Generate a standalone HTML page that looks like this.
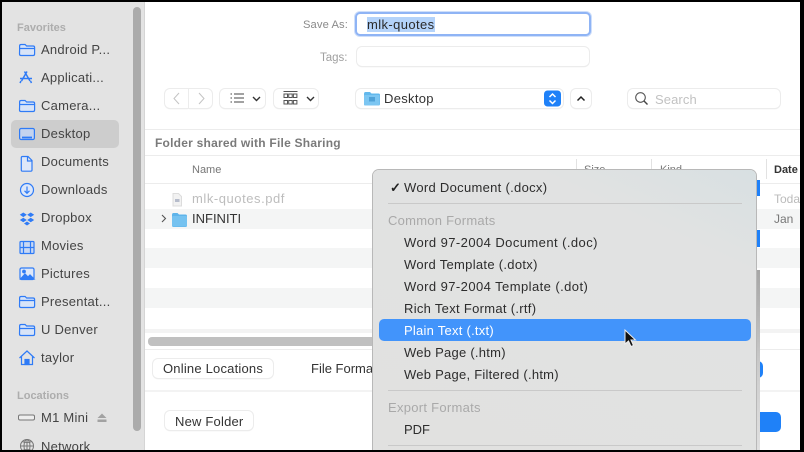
<!DOCTYPE html>
<html><head><meta charset="utf-8">
<style>
html,body{margin:0;padding:0;background:#000}
#p{position:relative;width:804px;height:452px;overflow:hidden;background:#000;font-family:"Liberation Sans",sans-serif;font-size:13px;color:#3a3a3a}
#c{position:absolute;left:0;top:0;width:804px;height:452px;filter:blur(.3px)}
#w{position:absolute;left:2px;top:2px;width:798px;height:448px;background:#fff;overflow:hidden}
.a{position:absolute;white-space:nowrap}
.b{position:absolute;background:#fff;border-radius:5px;box-shadow:0 0 0 1px #ececec,0 1px 1px #ddd}
.s{position:absolute;left:41px;font-size:13px;color:#444;white-space:nowrap;line-height:16px;letter-spacing:.25px}
.r{position:absolute;left:145px;width:655px;background:#f4f5f5}
.m{position:absolute;left:404px;font-size:13px;color:#2d2d2d;white-space:nowrap;line-height:16px;letter-spacing:.3px}
svg{position:absolute;overflow:visible}
.ln{fill:none;stroke:#2f7bf6;stroke-width:1.2}
</style></head><body>
<div id="p"><div id="c">
<div id="w"></div>

<!-- sidebar -->
<div class="a" style="left:2px;top:2px;width:142px;height:448px;background:#e3e3e3;border-right:1px solid #d5d5d5"></div>
<div class="a" style="left:133px;top:7px;width:8px;height:424px;background:#ababab;border-radius:4px"></div>
<div class="a" style="left:11px;top:120px;width:108px;height:28px;background:#cdcdcd;border-radius:5px"></div>
<div class="a" style="left:17px;top:21px;font-size:11px;font-weight:bold;color:#adadad;line-height:14px">Favorites</div>
<div class="s" style="top:42px">Android P...</div>
<div class="s" style="top:70px">Applicati...</div>
<div class="s" style="top:98px">Camera...</div>
<div class="s" style="top:126px">Desktop</div>
<div class="s" style="top:154px">Documents</div>
<div class="s" style="top:182px">Downloads</div>
<div class="s" style="top:210px">Dropbox</div>
<div class="s" style="top:238px">Movies</div>
<div class="s" style="top:266px">Pictures</div>
<div class="s" style="top:294px">Presentat...</div>
<div class="s" style="top:322px">U Denver</div>
<div class="s" style="top:350px">taylor</div>
<div class="a" style="left:17px;top:389px;font-size:11px;font-weight:bold;color:#adadad;line-height:14px">Locations</div>
<div class="s" style="top:410px">M1 Mini</div>
<div class="s" style="top:439px">Network</div>

<svg width="144" height="452" style="left:0;top:0">
<g class="ln">
<path d="M19.600 50V46q0-1.500 1.500-1.500h4l1.500 1.500h6.500q1.500 0 1.500 1.500v6.500q0 1.500-1.500 1.500H21q-1.500 0-1.500-1.500zM19.600 48.500h14.800" fill="#d8e4f8"/>
<path d="M27 71.500l-5.500 9.500M24.500 71.500l5.500 9.500M20 78.500h12M21 81l-1 2M30.500 81l1 2" stroke-width="1.500"/>
<path d="M19.600 106V102q0-1.500 1.500-1.500h4l1.500 1.500h6.500q1.500 0 1.500 1.500v6.500q0 1.500-1.500 1.500H21q-1.500 0-1.500-1.500zM19.600 104.500h14.800" fill="#d8e4f8"/>
<rect x="19.600" y="128.500" width="14.800" height="11" rx="1.500" fill="#c3d3ef"/>
<path d="M22 137.500h10" stroke-width="1.800"/>
<path d="M22.500 156.500h5.500l4 4v9.500q0 1.200-1.200 1.200h-8.300q-1.200 0-1.200-1.200v-12.300q0-1.200 1.200-1.200zM27.500 156.500v4.500h4.500" fill="#dde7f9"/>
<circle cx="27" cy="190" r="6.500" fill="#dde7f9"/><path d="M27 186.500v6.500M24.500 190.800l2.500 2.500 2.500-2.500"/>
<rect x="20" y="241.500" width="14" height="12" rx="1" fill="#c9d8f3"/><path d="M23.500 241.500v12M30.500 241.500v12M20 247.500h14"/>
<rect x="20" y="268" width="14" height="11.500" rx="1.500" fill="#dde7f9"/><path d="M20.500 279l4.500-5 3 3 2-2 4 4z" fill="#2f7bf6"/><circle cx="24" cy="271.500" r="1.300" fill="#2f7bf6"/>
<path d="M19.600 302V298q0-1.500 1.500-1.500h4l1.500 1.500h6.500q1.500 0 1.500 1.500v6.500q0 1.500-1.500 1.500H21q-1.500 0-1.500-1.500zM19.600 300.500h14.800" fill="#d8e4f8"/>
<path d="M19.600 330V326q0-1.500 1.500-1.500h4l1.500 1.500h6.500q1.500 0 1.500 1.500v6.500q0 1.500-1.500 1.500H21q-1.500 0-1.500-1.500zM19.600 328.500h14.800" fill="#d8e4f8"/>
<path d="M19.500 358l7.500-7 7.500 7M21.500 356.500v8h11v-8"/><rect x="25" y="359.500" width="4" height="5" fill="#2f7bf6"/>
</g>
<g fill="#2f7bf6">
<path d="M23.300 212.500l3.500 2.300-3.500 2.300-3.500-2.300zM30.700 212.500l3.500 2.300-3.500 2.300-3.500-2.300zM23.300 217.700l3.500 2.300-3.500 2.300-3.500-2.300zM30.700 217.700l3.500 2.300-3.500 2.300-3.500-2.300zM27 221.500l3 2-3 2-3-2z"/>
</g>
<rect x="18.500" y="415" width="16" height="5" rx="1.500" fill="#eee" stroke="#777" stroke-width="1"/>
<path d="M97.500 418l4.500-4.500 4.500 4.500z M97.500 419.500h9v2.500h-9z" fill="#a2a2a2"/>
<g fill="none" stroke="#777" stroke-width="1"><circle cx="27" cy="446" r="6.500"/><path d="M20.500 446h13M27 439.500v13M22 441.500q5 2 10 0M22 450.500q5-2 10 0"/><ellipse cx="27" cy="446" rx="3" ry="6.500"/></g>
</svg>

<!-- top form -->
<div class="a" style="left:303px;top:18px;font-size:11.200px;letter-spacing:.1px;color:#8a8a8a;line-height:15px">Save As:</div>
<div class="a" style="left:355px;top:12px;width:232px;height:20px;background:#fff;border:2px solid #8fb4f5;border-radius:5px;box-shadow:0 0 0 1px #cfdffa"></div>
<div class="a" style="left:367px;top:17px;width:68px;height:15px;background:#b4d3fa"></div>
<div class="a" style="left:367px;top:17px;font-size:13px;letter-spacing:.4px;color:#2a2a2a;line-height:15px">mlk-quotes</div>
<div class="a" style="left:320px;top:51px;font-size:11.500px;color:#a0a0a0;line-height:15px">Tags:</div>
<div class="b" style="left:357px;top:47px;width:232px;height:19px"></div>

<!-- toolbar -->
<div class="b" style="left:165px;top:89px;width:23px;height:19px;border-radius:5px 0 0 5px"></div>
<div class="b" style="left:189px;top:89px;width:23px;height:19px;border-radius:0 5px 5px 0"></div>
<div class="b" style="left:220px;top:89px;width:45px;height:19px"></div>
<div class="b" style="left:274px;top:89px;width:44px;height:19px"></div>
<div class="b" style="left:356px;top:89px;width:207px;height:19px"></div>
<div class="b" style="left:571px;top:89px;width:20px;height:19px"></div>
<div class="b" style="left:628px;top:89px;width:152px;height:19px"></div>
<svg width="804" height="130" style="left:0;top:0">
<path d="M179 93l-5 5.500 5 5.500M199 93l5 5.500-5 5.500" fill="none" stroke="#c4c4c4" stroke-width="1"/>
<path d="M234 94h10M234 98h10M234 102h10M230.500 94h1.500M230.500 98h1.500M230.500 102h1.500" stroke="#444" stroke-width="1.100" fill="none"/>
<path d="M253 97l3.500 3.500 3.500-3.500M307 97l3.500 3.500 3.500-3.500" fill="none" stroke="#333" stroke-width="1.400"/>
<path d="M283.500 91.500h14" stroke="#555" stroke-width="1"/>
<path d="M284 94h3.500v3.500h-3.500zM288.700 94h3.500v3.500h-3.500zM293.400 94h3.500v3.500h-3.500zM284 100.500h3.500v3.500h-3.500zM288.700 100.500h3.500v3.500h-3.500zM293.400 100.500h3.500v3.500h-3.500z" fill="none" stroke="#555" stroke-width="1"/>
<path d="M364 94q0-2 1.500-2h4.500l1.500 1.500h7q1.500 0 1.500 1.500v9q0 1.500-1.500 1.500h-13q-1.500 0-1.500-1.500z" fill="#62b8ec"/>
<rect x="364" y="95" width="15.500" height="10.500" rx="1" fill="#7cc6f2"/>
<rect x="369" y="97" width="6" height="4.500" fill="#4fa2d8"/>
<rect x="544" y="90.500" width="17" height="16" rx="3.500" fill="#1f81f8"/>
<path d="M549.500 97l3-3 3 3M549.500 100.500l3 3 3-3" fill="none" stroke="#fff" stroke-width="1.500"/>
<path d="M577.500 100.500l3.500-3.500 3.500 3.500" fill="none" stroke="#222" stroke-width="1.500"/>
<circle cx="640.500" cy="97.500" r="4.800" fill="none" stroke="#555" stroke-width="1.100"/><path d="M644 101l3.500 3.500" stroke="#444" stroke-width="1.400"/>
</svg>
<div class="a" style="left:384px;top:91px;font-size:13px;letter-spacing:.3px;color:#333;line-height:16px">Desktop</div>
<div class="a" style="left:655px;top:92px;font-size:13px;letter-spacing:.1px;color:#c2c2c2;line-height:16px">Search</div>

<!-- separators -->
<div class="a" style="left:145px;top:129px;width:655px;height:1px;background:#ececec"></div>
<div class="a" style="left:155px;top:136px;font-size:12px;letter-spacing:.23px;font-weight:bold;color:#7a7a7a;line-height:15px">Folder shared with File Sharing</div>
<div class="a" style="left:145px;top:155px;width:655px;height:1px;background:#ececec"></div>
<div class="a" style="left:192px;top:163px;font-size:11px;color:#777;line-height:14px">Name</div>
<div class="a" style="left:584px;top:163px;font-size:11px;color:#777;line-height:14px">Size</div>
<div class="a" style="left:660px;top:163px;font-size:11px;color:#777;line-height:14px">Kind</div>
<div class="a" style="left:774px;top:163px;font-size:11px;font-weight:bold;color:#333;line-height:14px">Date</div>
<div class="a" style="left:576px;top:159px;width:1px;height:20px;background:#e2e2e2"></div>
<div class="a" style="left:651px;top:159px;width:1px;height:20px;background:#e2e2e2"></div>
<div class="a" style="left:766px;top:159px;width:1px;height:20px;background:#e2e2e2"></div>
<div class="a" style="left:145px;top:183px;width:655px;height:1px;background:#ececec"></div>

<!-- rows -->
<div class="r" style="top:209px;height:20px"></div>
<div class="r" style="top:248px;height:20px"></div>
<div class="r" style="top:288px;height:20px"></div>
<div class="a" style="left:145px;top:329px;width:655px;height:4px;background:#f3f3f3"></div>
<div class="a" style="left:192px;top:191px;font-size:13px;letter-spacing:.55px;color:#bdbdbd;line-height:16px">mlk-quotes.pdf</div>
<div class="a" style="left:192px;top:211px;font-size:13px;color:#333;line-height:16px">INFINITI</div>
<div class="a" style="left:774px;top:191px;font-size:12px;color:#bbb;line-height:16px">Toda</div>
<div class="a" style="left:774px;top:211px;font-size:12px;color:#777;line-height:16px">Jan</div>
<svg width="200" height="240" style="left:0;top:0">
<path d="M173 193.500h5.500l3 3v9.500h-8.500z" fill="#f2f2f2" stroke="#dcdcdc"/><rect x="175" y="199" width="4.500" height="3" fill="#b6bccb"/>
<path d="M162 215l3.500 3.500-3.500 3.500" fill="none" stroke="#555" stroke-width="1.100"/>
<path d="M172 215q0-2 1.500-2h4l1.500 1.500h6.500q1.500 0 1.500 1.500v9.500q0 1.500-1.500 1.500h-12q-1.500 0-1.500-1.500z" fill="#5eb4ea"/>
<rect x="172" y="216" width="15" height="10.500" rx="1" fill="#75c2f0"/>
</svg>

<!-- blue slivers behind menu -->
<div class="a" style="left:750px;top:180px;width:10px;height:16px;background:#1f81f8"></div>
<div class="a" style="left:750px;top:230px;width:10px;height:17px;background:#1f81f8"></div>

<!-- horizontal scrollbar -->
<div class="a" style="left:148px;top:337px;width:240px;height:9px;background:#c0c0c0;border-radius:4px"></div>
<div class="a" style="left:145px;top:349px;width:655px;height:1px;background:#ececec"></div>

<!-- bottom -->
<div class="b" style="left:153px;top:359px;width:120px;height:19px"></div>
<div class="a" style="left:163px;top:361px;font-size:13px;letter-spacing:.2px;color:#333;line-height:16px">Online Locations</div>
<div class="a" style="left:311px;top:361px;font-size:13px;color:#333;line-height:16px">File Format</div>
<div class="a" style="left:145px;top:390px;width:655px;height:2px;background:#f3f3f3"></div>
<div class="b" style="left:165px;top:411px;width:88px;height:19px"></div>
<div class="a" style="left:175px;top:414px;font-size:13px;letter-spacing:.2px;color:#333;line-height:16px">New Folder</div>
<div class="a" style="left:750px;top:361px;width:13px;height:17px;background:#1f81f8;border-radius:0 5px 5px 0"></div>
<div class="a" style="left:750px;top:412px;width:31px;height:20px;background:#1f81f8;border-radius:0 5px 5px 0"></div>

<!-- shadow strip right of menu -->
<div class="a" style="left:756px;top:270px;width:4px;height:180px;background:linear-gradient(180deg,#a6a6a6 0%,#bdbdbd 35%,#d0d0d0 60%,#e0e0e0 100%)"></div>

<!-- menu -->
<div class="a" style="left:373px;top:170px;width:383px;height:290px;background:linear-gradient(205deg,#d8e0e2 0%,#e1e2e2 22%,#e1e1e0 100%);border-radius:6px;box-shadow:0 0 0 1px #b8b8b8"></div>
<div class="a" style="left:390px;top:180px;font-size:13px;font-weight:bold;color:#222;line-height:16px">✓</div>
<div class="m" style="top:180px">Word Document (.docx)</div>
<div class="a" style="left:388px;top:203px;width:354px;height:1px;background:#c9c9c9"></div>
<div class="a" style="left:388px;top:213px;font-size:13px;letter-spacing:.25px;color:#a9a9a9;line-height:16px">Common Formats</div>
<div class="m" style="top:235px;letter-spacing:.43px">Word 97-2004 Document (.doc)</div>
<div class="m" style="top:257px">Word Template (.dotx)</div>
<div class="m" style="top:279px;letter-spacing:.43px">Word 97-2004 Template (.dot)</div>
<div class="m" style="top:301px">Rich Text Format (.rtf)</div>
<div class="a" style="left:379px;top:319px;width:372px;height:22px;background:#4294fb;border-radius:5px"></div>
<div class="m" style="top:323px;color:#fff;letter-spacing:.25px">Plain Text (.txt)</div>
<div class="m" style="top:345px;letter-spacing:.25px">Web Page (.htm)</div>
<div class="m" style="top:367px;letter-spacing:.25px">Web Page, Filtered (.htm)</div>
<div class="a" style="left:388px;top:390px;width:354px;height:1px;background:#c9c9c9"></div>
<div class="a" style="left:388px;top:400px;font-size:13px;letter-spacing:.28px;color:#a9a9a9;line-height:16px">Export Formats</div>
<div class="m" style="top:422px;letter-spacing:0">PDF</div>
<div class="a" style="left:388px;top:445px;width:354px;height:1px;background:#c9c9c9"></div>

<!-- cursor -->
<svg width="20" height="24" style="left:622px;top:328px"><path d="M3 2v14l3.500-3 2.500 5.500 2.500-1-2.500-5.500h4.500z" fill="#111" stroke="#eee" stroke-width="1"/></svg>
</div>
<!-- frame -->
<div class="a" style="left:0;top:0;width:804px;height:2px;background:#000"></div>
<div class="a" style="left:0;top:450px;width:804px;height:2px;background:#000"></div>
<div class="a" style="left:0;top:0;width:2px;height:452px;background:#000"></div>
<div class="a" style="left:800px;top:0;width:4px;height:452px;background:#000"></div>
</div>
</body></html>
